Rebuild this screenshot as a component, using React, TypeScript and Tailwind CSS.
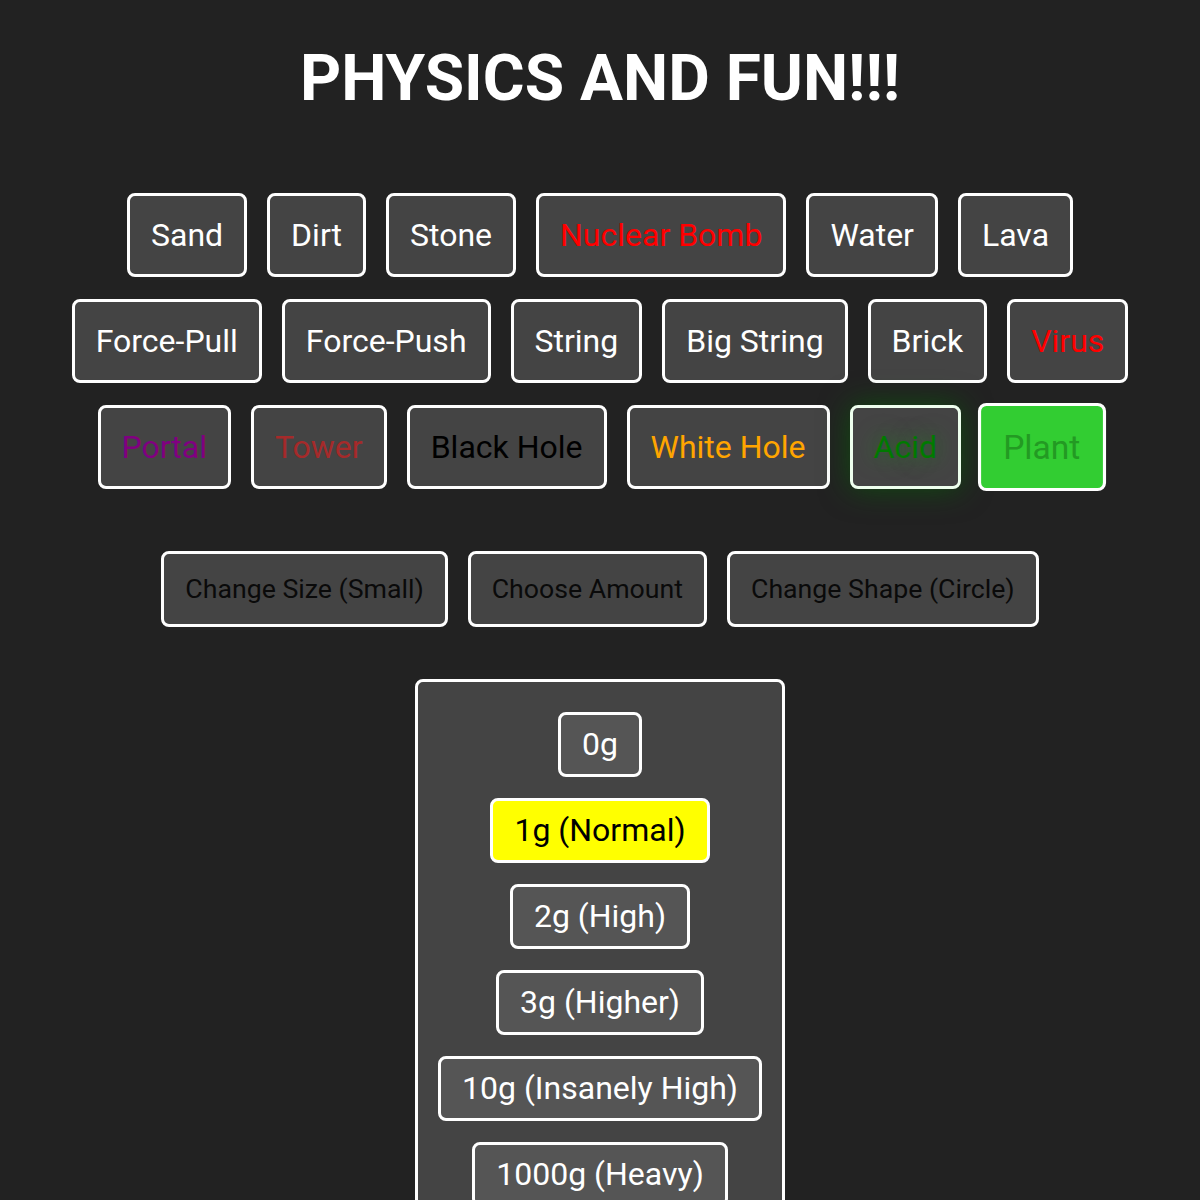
import React from "react";

type Item = { label: string; className?: string };

const base = "text-white bg-[#444444] border-white";

const elements: Item[] = [
  { label: "Sand" },
  { label: "Dirt" },
  { label: "Stone" },
  { label: "Nuclear Bomb", className: "text-[#ff0000] bg-[#444444] border-white" },
  { label: "Water" },
  { label: "Lava" },
  { label: "Force-Pull" },
  { label: "Force-Push" },
  { label: "String" },
  { label: "Big String" },
  { label: "Brick" },
  { label: "Virus", className: "text-[#ff0000] bg-[#444444] border-white" },
  { label: "Portal", className: "text-[#800080] bg-[#444444] border-white" },
  { label: "Tower", className: "text-[#a52a2a] bg-[#444444] border-white" },
  { label: "Black Hole", className: "text-black bg-[#444444] border-white" },
  { label: "White Hole", className: "text-[#ffa500] bg-[#444444] border-white" },
  {
    label: "Acid",
    className:
      "text-[#007a00] bg-[#444444] border-[#eeffee] shadow-[0_0_30px_rgba(0,110,0,0.55)] [text-shadow:0_0_22px_rgba(0,170,0,0.6)]",
  },
  { label: "Plant", className: "text-[#239a23] bg-[#32cd32] border-white scale-105" },
];

const options = ["Change Size (Small)", "Choose Amount", "Change Shape (Circle)"];

const gravity = [
  "0g",
  "1g (Normal)",
  "2g (High)",
  "3g (Higher)",
  "10g (Insanely High)",
  "1000g (Heavy)",
];

const App = () => {
  return (
    <div className="min-h-screen bg-[#222222] font-[Roboto,sans-serif] text-white overflow-hidden">
      <h1 className="pt-[41px] text-center text-[64px] leading-[75px] font-bold text-white">
        PHYSICS AND FUN!!!
      </h1>

      <div className="mt-[77px] max-w-[1100px] mx-auto flex flex-wrap justify-center gap-x-[20px] gap-y-[22px]">
        {elements.map((el) => (
          <button
            key={el.label}
            className={`border-[3px] rounded-lg px-[21px] py-[20px] text-[32px] leading-[38px] ${
              el.className ?? base
            }`}
          >
            {el.label}
          </button>
        ))}
      </div>

      <div className="mt-[62px] flex justify-center gap-[20px]">
        {options.map((o) => (
          <button
            key={o}
            className="border-[3px] border-white rounded-lg bg-[#444444] px-[21px] py-[20px] text-[26.7px] leading-[30px] text-[#0a0a0a]"
          >
            {o}
          </button>
        ))}
      </div>

      <div className="mt-[52px] mx-auto w-[370px] border-[3px] border-white rounded-lg bg-[#444444] pt-[30px] pb-[30px] flex flex-col items-center gap-[21px]">
        {gravity.map((g) => (
          <button
            key={g}
            className={`border-[3px] border-white rounded-lg px-[21px] py-[10px] text-[32px] leading-[39px] ${
              g === "1g (Normal)" ? "bg-[#ffff00] text-black" : "bg-[#555555] text-white"
            }`}
          >
            {g}
          </button>
        ))}
      </div>
    </div>
  );
};

export default App;
